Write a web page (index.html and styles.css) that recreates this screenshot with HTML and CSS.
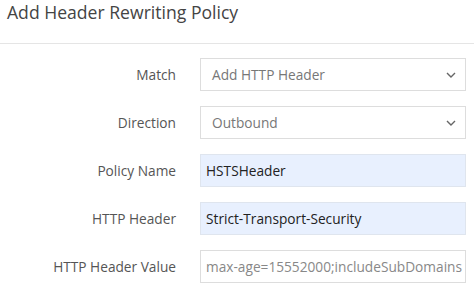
FILE: index.html
```html
<!DOCTYPE html>
<html lang="en">
<head>
  <meta charset="UTF-8" />
  <title>Add Header Rewriting Policy</title>
  <link rel="stylesheet" href="styles.css">
</head>
<body>

  <div class="dialog">
    <h1 class="dialog-title">Add Header Rewriting Policy</h1>

    <form class="policy-form">
      <div class="form-row">
        <label class="form-label">Match</label>
        <div class="form-select">
          <span class="select-text">Add HTTP Header</span>
          <svg class="chevron" width="10" height="6" viewBox="0 0 10 6"><path d="M1 1l4 4 4-4" fill="none" stroke="#666" stroke-width="1.4"/></svg>
        </div>
      </div>

      <div class="form-row">
        <label class="form-label">Direction</label>
        <div class="form-select">
          <span class="select-text">Outbound</span>
          <svg class="chevron" width="10" height="6" viewBox="0 0 10 6"><path d="M1 1l4 4 4-4" fill="none" stroke="#666" stroke-width="1.4"/></svg>
        </div>
      </div>

      <div class="form-row">
        <label class="form-label">Policy Name</label>
        <div class="form-input filled">HSTSHeader</div>
      </div>

      <div class="form-row">
        <label class="form-label">HTTP Header</label>
        <div class="form-input filled">Strict-Transport-Security</div>
      </div>

      <div class="form-row">
        <label class="form-label">HTTP Header Value</label>
        <div class="form-input placeholder">max-age=15552000;includeSubDomains</div>
      </div>
    </form>
  </div>

</body>
</html>
```

FILE: styles.css
```css
*, *::before, *::after {
  box-sizing: border-box;
}

body, html {
  margin: 0;
  padding: 0;
  background: #fff;
  font-family: 'Open Sans', sans-serif;
  overflow: hidden;
}

.dialog-title {
  margin: 0;
  padding: 0 7px;
  height: 44px;
  font-size: 17.6px;
  font-weight: 400;
  line-height: 24px;
  color: #444;
  border-bottom: 1px solid #e5e5e5;
}

.policy-form {
  display: flex;
  flex-direction: column;
  gap: 15px;
  padding-top: 14px;
}

.form-row {
  display: flex;
  align-items: center;
  height: 33px;
}

.form-label {
  width: 176px;
  text-align: right;
  font-size: 13.7px;
  color: #555;
  margin-right: 24px;
}

.form-select, .form-input {
  width: 266px;
  height: 33px;
  display: flex;
  align-items: center;
  font-size: 13.7px;
  border: 1px solid #ddd;
}

.form-select {
  justify-content: space-between;
  padding: 0 9px 0 11px;
  color: #777;
}

.form-input {
  padding: 0 4px 0 5px;
  white-space: nowrap;
  overflow: hidden;
}

.form-input.filled {
  background: #e8f0fe;
  border-color: #dfe5ee;
  color: #222;
}

.form-input.placeholder {
  color: #888;
}
```
